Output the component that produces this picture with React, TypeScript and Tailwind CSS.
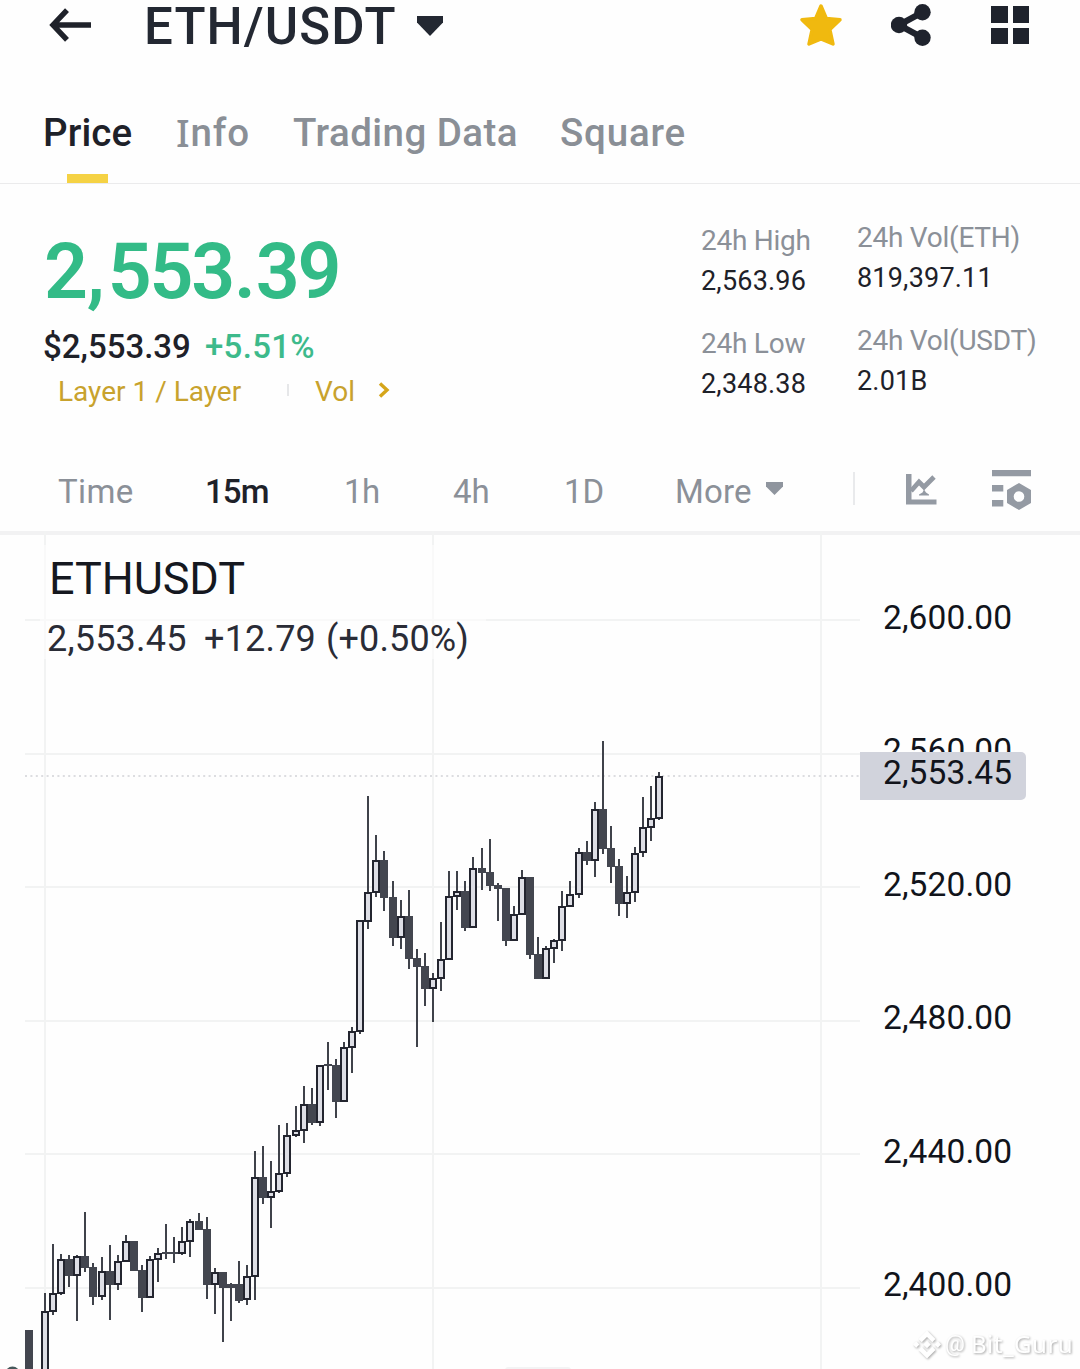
import React from "react";

// x centre, wick top, body top, body bottom, wick bottom, rising
type Candle = [number, number, number, number, number, 0 | 1];

const candles: Candle[] = [
  [29, 1330, 1330, 1380, 1380, 0],
  [45, 1293, 1311, 1380, 1380, 1],
  [53, 1244, 1293, 1312, 1315, 1],
  [61, 1254, 1259, 1294, 1295, 1],
  [69, 1255, 1259, 1276, 1287, 0],
  [77, 1255, 1256, 1276, 1321, 1],
  [85, 1212, 1256, 1268, 1272, 0],
  [93, 1263, 1267, 1297, 1305, 0],
  [102, 1257, 1271, 1297, 1300, 1],
  [110, 1245, 1271, 1285, 1320, 0],
  [118, 1255, 1261, 1285, 1290, 1],
  [126, 1235, 1241, 1262, 1262, 1],
  [134, 1241, 1241, 1271, 1271, 0],
  [142, 1265, 1270, 1298, 1312, 0],
  [150, 1256, 1259, 1298, 1298, 1],
  [158, 1248, 1253, 1260, 1282, 1],
  [166, 1224, 1252, 1254, 1259, 0],
  [174, 1237, 1252, 1254, 1263, 0],
  [182, 1227, 1241, 1254, 1255, 1],
  [190, 1219, 1221, 1242, 1257, 1],
  [199, 1213, 1221, 1230, 1230, 0],
  [207, 1217, 1229, 1285, 1299, 0],
  [215, 1268, 1272, 1285, 1314, 1],
  [223, 1272, 1272, 1288, 1342, 0],
  [231, 1283, 1284, 1288, 1321, 0],
  [239, 1261, 1284, 1301, 1303, 0],
  [247, 1265, 1276, 1300, 1305, 1],
  [255, 1151, 1177, 1277, 1300, 1],
  [263, 1146, 1177, 1198, 1204, 0],
  [271, 1161, 1191, 1198, 1228, 1],
  [279, 1125, 1173, 1192, 1193, 1],
  [287, 1123, 1135, 1174, 1177, 1],
  [296, 1106, 1130, 1136, 1137, 1],
  [304, 1086, 1104, 1131, 1143, 1],
  [312, 1088, 1104, 1123, 1125, 0],
  [320, 1065, 1065, 1123, 1126, 1],
  [328, 1042, 1064, 1066, 1090, 0],
  [336, 1059, 1065, 1102, 1118, 0],
  [344, 1042, 1047, 1102, 1102, 1],
  [352, 1027, 1031, 1048, 1073, 1],
  [360, 920, 920, 1032, 1034, 1],
  [368, 796, 892, 922, 929, 1],
  [376, 835, 860, 893, 897, 1],
  [384, 851, 860, 898, 911, 0],
  [393, 881, 897, 938, 946, 0],
  [401, 900, 916, 938, 949, 1],
  [409, 890, 916, 959, 969, 0],
  [417, 949, 958, 967, 1047, 0],
  [425, 953, 966, 989, 1006, 0],
  [433, 973, 978, 989, 1022, 1],
  [441, 922, 959, 979, 991, 1],
  [449, 871, 896, 960, 960, 1],
  [457, 871, 891, 897, 910, 1],
  [465, 881, 891, 928, 931, 0],
  [473, 857, 868, 928, 928, 1],
  [482, 848, 868, 873, 890, 0],
  [490, 839, 872, 886, 891, 0],
  [498, 883, 885, 889, 921, 0],
  [506, 888, 888, 941, 946, 0],
  [514, 906, 914, 941, 941, 1],
  [522, 870, 877, 915, 915, 1],
  [530, 877, 877, 955, 959, 0],
  [538, 937, 954, 979, 979, 0],
  [546, 946, 948, 979, 979, 1],
  [554, 939, 940, 949, 963, 1],
  [562, 891, 906, 941, 951, 1],
  [570, 881, 894, 907, 907, 1],
  [579, 848, 852, 895, 898, 1],
  [587, 841, 852, 861, 865, 0],
  [595, 802, 809, 861, 877, 1],
  [603, 741, 809, 849, 854, 0],
  [611, 826, 848, 867, 883, 0],
  [619, 859, 866, 904, 916, 0],
  [627, 876, 892, 904, 918, 1],
  [635, 847, 853, 893, 902, 1],
  [643, 797, 827, 853, 857, 1],
  [651, 786, 818, 828, 841, 1],
  [659, 772, 776, 819, 820, 1],
];

const rows = [620, 754, 887, 1021, 1154, 1288];
const columns = [45, 433, 821];
const prices = ["2,600.00", "2,560.00", "2,520.00", "2,480.00", "2,440.00", "2,400.00"];

function Chart() {
  return (
    <svg className="absolute inset-0 h-[838px] w-[1080px]" viewBox="0 531 1080 838">
      <g stroke="#f2f3f3" strokeWidth="2">
        {rows.map((y) => (
          <line key={y} x1="25" x2="860" y1={y} y2={y} />
        ))}
        {columns.map((x) => (
          <line key={x} x1={x} x2={x} y1="531" y2="1369" />
        ))}
      </g>
      <rect x="40" y="545" width="446" height="114" fill="#fefefe" opacity="0.6" />
      <line x1="25" x2="860" y1="776" y2="776" stroke="#dcdde0" strokeWidth="2" strokeDasharray="2 3.4" />
      {candles.map(([x, wt, bt, bb, wb, up]) => (
        <g key={x}>
          <rect x={x - 1} y={wt} width="2" height={wb - wt} fill="#3f424a" />
          {up ? (
            <rect x={x - 3} y={bt + 1} width="6" height={bb - bt - 2} fill="#dddee5" stroke="#23252f" strokeWidth="2" />
          ) : (
            <rect x={x - 4} y={bt} width="8" height={bb - bt} fill="#43464f" />
          )}
        </g>
      ))}
      <circle cx="12.5" cy="1374" r="7.5" fill="#46595b" />
      <rect x="505" y="1367" width="66" height="6" rx="3" fill="#f3f3f4" />
    </svg>
  );
}

function Stat({ label, value, gap }: { label: string; value: string; gap: string }) {
  return (
    <div className={gap}>
      <div className="h-10 text-[28px] leading-10 tracking-[-0.25px] text-[#8b9098]">{label}</div>
      <div className="h-10 text-[27px] leading-10 tracking-[0.2px] text-[#1e2129]">{value}</div>
    </div>
  );
}

export default function App() {
  return (
    <div className="h-[1369px] w-[1080px] overflow-hidden whitespace-pre bg-[#fefefe] font-['Roboto',sans-serif] text-[#1e2129]">
      <header className="flex h-[50px] items-center">
        <svg className="ml-[48px] h-[34px] w-[44px]" viewBox="0 0 44 34" fill="none" stroke="#1f222a" strokeWidth="5.4">
          <path d="M43 17H5M19 2.2L5 17L19 31.8" />
        </svg>
        <h1 className="ml-[52px] mt-[3px] w-[259px] text-[51px] font-medium leading-[54px] tracking-[1.1px] text-[#232832]">ETH/USDT</h1>
        <svg className="ml-[14px] mt-0.5 h-5 w-[26px]" viewBox="0 0 26 20" fill="#232832">
          <path d="M0 0H26V6.5L13 20L0 6.5Z" />
        </svg>
        <svg className="ml-[356px] h-[44px] w-[44px]" viewBox="0 0 44 44">
          <path
            d="M22 3L27.3 15.5L41 16.8L30.8 26.4L34 41L22 35.8L10 41L13.2 26.4L3 16.8L16.7 15.5Z"
            fill="#f0b90f"
            stroke="#f0b90f"
            strokeWidth="3.5"
            strokeLinejoin="round"
          />
        </svg>
        <svg className="ml-[48px] h-[42px] w-[40px]" viewBox="0 0 40 42" fill="#1f232d">
          <path d="M8 21L32 8M8 21L32 34" stroke="#1f232d" strokeWidth="6.4" />
          <circle cx="8" cy="21" r="8.2" />
          <circle cx="31.5" cy="8.2" r="8.2" />
          <circle cx="31.5" cy="33.8" r="8.2" />
        </svg>
        <div className="ml-[60px] grid grid-cols-2 gap-[5px]">
          {[0, 1, 2, 3].map((i) => (
            <span key={i} className="h-[16.5px] w-[16.5px] bg-[#1f232d]" />
          ))}
        </div>
      </header>

      <nav className="flex h-[134px] border-b border-[#ebebec] pl-[43px] pt-[63px] text-[38.5px] font-medium leading-10 text-[#8a8f96]">
        <div className="relative h-full w-[133px] tracking-[0.1px] text-[#1e2129]">
          Price
          <span className="absolute bottom-0 left-[24px] h-[9px] w-[41px] bg-[#f5d244]" />
        </div>
        <div className="flex w-[117px] tracking-[0.9px]">
          <span className="-mt-px h-10 font-['Noto_Sans']">I</span>
          <span>nfo</span>
        </div>
        <div className="w-[267px] tracking-[0.45px]">Trading Data</div>
        <div className="tracking-[0.8px]">Square</div>
      </nav>

      <section className="flex h-[264px] pl-[43px]">
        <div className="w-[658px] pt-[47px]">
          <div className="ml-px h-20 text-[77px] font-semibold leading-[82px] tracking-[-2.2px] text-[#33bb87]">
            2<span className="pl-[1px] pr-[5px]">,</span>553<span className="pl-[1px] pr-[2px]">.</span>39
          </div>
          <div className="mt-4 flex h-10 text-[33px] font-medium leading-10">
            <span className="w-[162px]">$2,553.39</span>
            <span className="tracking-[0.3px] text-[#3dba8b]">+5.51%</span>
          </div>
          <div className="mt-1 flex h-[42px] items-center pl-[15px] text-[28px] text-[#c8a22d]">
            <span className="w-[229px]">Layer 1 / Layer</span>
            <span className="-mt-1 h-3 w-0.5 bg-[#e6e7e9]" />
            <span className="ml-[26px] w-[63px]">Vol</span>
            <svg className="-mt-1 h-4 w-3" viewBox="0 0 12 16" fill="none" stroke="#d5a51a" strokeWidth="3.4">
              <path d="M2 1.5L9 8L2 14.5" />
            </svg>
          </div>
        </div>
        <div className="w-[156px] pt-[37px]">
          <Stat label="24h High" value="2,563.96" gap="mb-[23px]" />
          <Stat label="24h Low" value="2,348.38" gap="" />
        </div>
        <div className="pt-[34px]">
          <Stat label="24h Vol(ETH)" value="819,397.11" gap="mb-[23px]" />
          <Stat label="24h Vol(USDT)" value="2.01B" gap="" />
        </div>
      </section>

      <nav className="flex h-[83px] items-start pl-[58px] pt-[24px] text-[33px] leading-10 text-[#8b9098]">
        <span className="w-[147px] tracking-[0.4px]">Time</span>
        <span className="w-[139px] font-medium tracking-[-0.9px] text-[#1e2129]">15m</span>
        <span className="w-[109px] tracking-[-0.5px]">1h</span>
        <span className="w-[111px]">4h</span>
        <span className="w-[111px]">1D</span>
        <span className="w-[91px] tracking-[0.2px]">More</span>
        <svg className="mt-[10px] h-[13px] w-[17px]" viewBox="0 0 17 13" fill="#8f959e">
          <path d="M0 0H17V4.5L8.5 13L0 4.5Z" />
        </svg>
        <span className="ml-[70px] h-[33px] w-0.5 bg-[#e9eaec]" />
        <svg className="ml-[51px] mt-[2px] h-[31px] w-[31px]" viewBox="0 0 31 31" fill="#949aa3">
          <path d="M0 0H5.5V25.5H30.5V30.5H0Z" />
          <path d="M5 17L13 8L18 13L28 3" fill="none" stroke="#949aa3" strokeWidth="4.8" />
          <path d="M18 15.5L20 18.5L23 20.5V21.5H13V20.5L16.5 18.5Z" />
        </svg>
        <svg className="-mt-[2px] ml-[55px] h-[40px] w-[40px]" viewBox="0 0 40 40" fill="#949aa3">
          <path d="M0 0H39V6.2H0ZM0 15H11.3V21.5H0ZM0 30H11.3V36.5H0Z" />
          <path fillRule="evenodd" d="M27 13L39 20V33L27 40L15 33V20ZM27 21.2A5.3 5.3 0 1 0 27 31.8A5.3 5.3 0 1 0 27 21.2Z" />
        </svg>
      </nav>

      <main className="relative flex h-[838px] border-t-4 border-[#f2f2f3]">
        <div className="absolute inset-x-0 -top-1 h-[838px]">
          <Chart />
        </div>
        <div className="relative w-[883px] pl-[48px] pt-[19px]">
          <div className="pl-px text-[45px] leading-[50px] tracking-[-0.1px] text-[#15181f]">ETHUSDT</div>
          <div className="-ml-px mt-[10px] flex h-[50px] text-[36px] leading-[50px] text-[#2a2c36]">
            <span className="w-[157px] tracking-[0.2px]">2,553.45</span>
            <span className="w-[122px] tracking-[0.2px]">+12.79</span>
            <span className="tracking-[0.15px]">(+0.50%)</span>
          </div>
        </div>
        <div className="relative pt-[16px] text-[33.5px] tracking-[0.1px] text-[#11141b]">
          {prices.map((p) => (
            <div key={p} className="h-[133.4px] leading-[133.4px]">
              {p}
            </div>
          ))}
        </div>
        <div className="absolute left-[860px] top-[217px] h-12 w-[166px] rounded-r-[5px] bg-[#d1d3dc] pl-[23px] text-[33.5px] leading-[42px] tracking-[0.1px] text-[#11141b]">
          2,553.45
        </div>
        <div className="absolute left-[913px] top-[793px] flex h-8 items-center gap-1 text-white [filter:drop-shadow(1px_1px_1px_#a8a8a8)]">
          <svg className="h-[29px] w-[28px]" viewBox="0 0 28 28" fill="#ffffff">
            <path d="M14 0L22.5 8.5L19.3 11.7L14 6.4L8.7 11.7L5.5 8.5ZM14 28L22.5 19.5L19.3 16.3L14 21.6L8.7 16.3L5.5 19.5ZM3.2 10.8L6.4 14L3.2 17.2L0 14ZM24.8 10.8L28 14L24.8 17.2L21.6 14ZM14 10.2L17.8 14L14 17.8L10.2 14Z" />
          </svg>
          <span className="flex text-[24px] leading-8">
            <span className="w-[26px] text-[22px]">@</span>
            <span className="font-['Noto_Sans'] tracking-[0.5px]">Bit_Guru</span>
          </span>
        </div>
      </main>
    </div>
  );
}
